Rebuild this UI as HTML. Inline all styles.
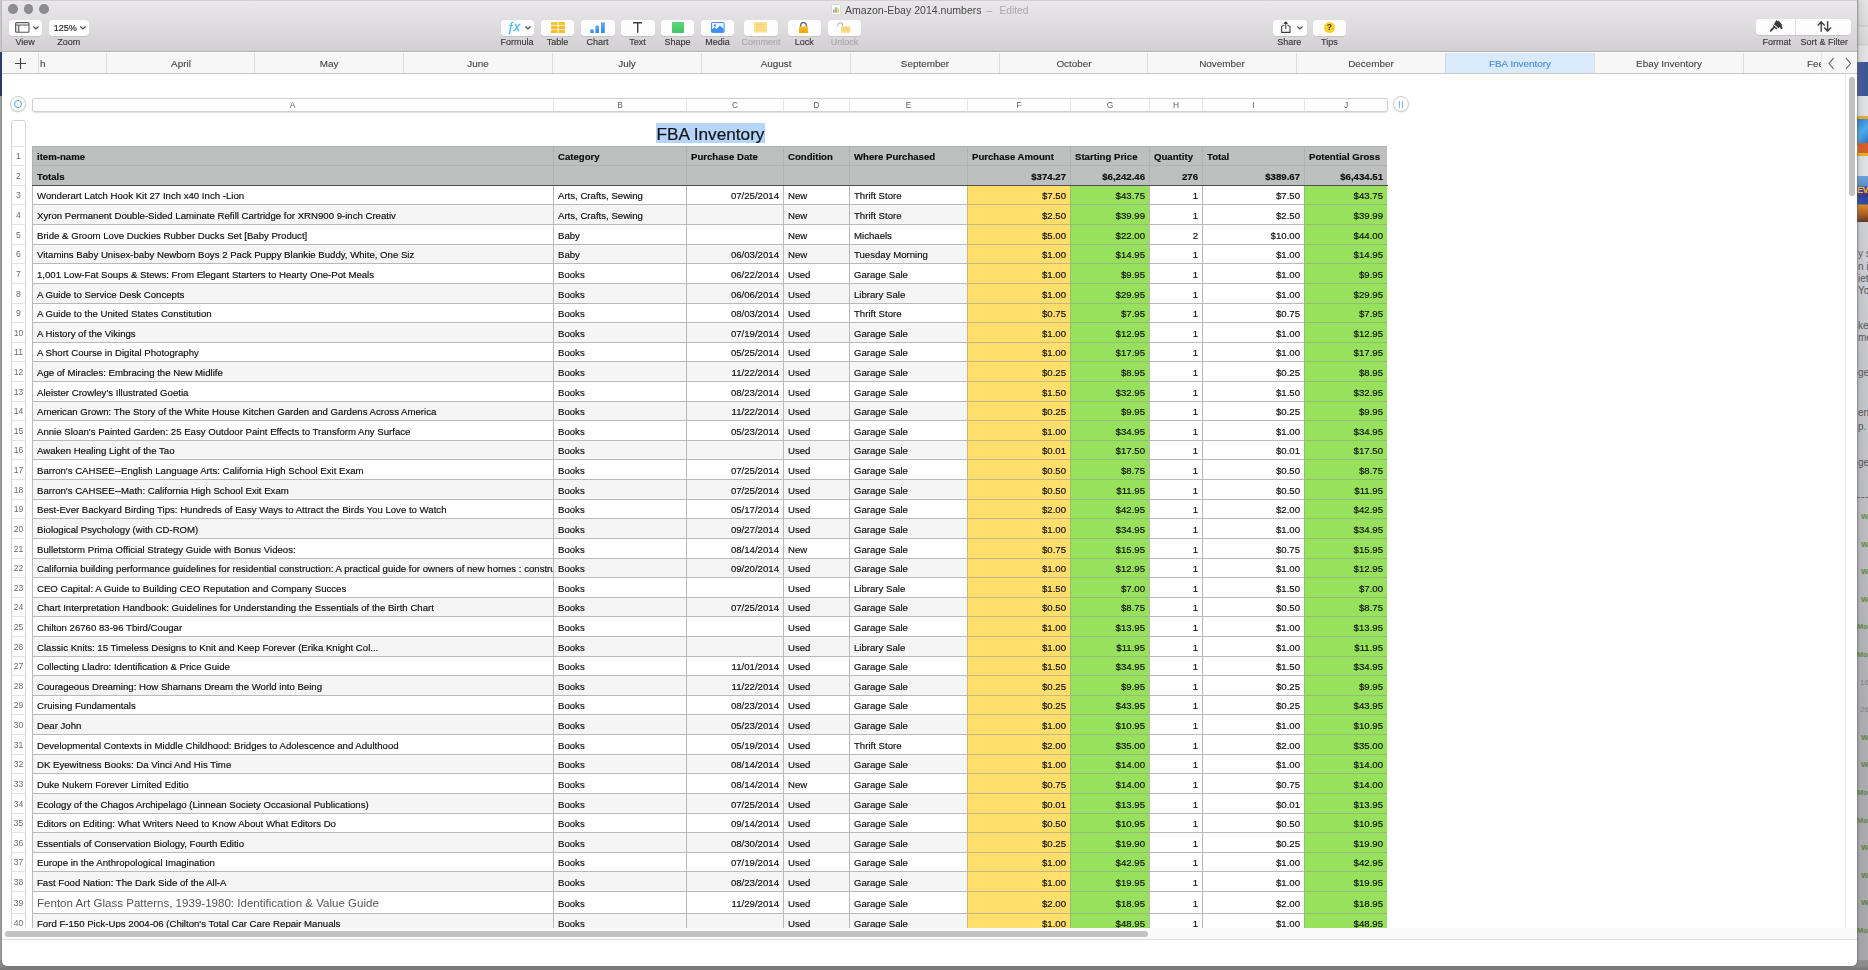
<!DOCTYPE html>
<html><head><meta charset="utf-8"><title>Amazon-Ebay 2014.numbers</title>
<style>
*{box-sizing:border-box;margin:0;padding:0}
html,body{width:1868px;height:970px;overflow:hidden}
body{position:relative;background:#8e8e8e;font-family:"Liberation Sans",sans-serif;color:#000}
.abs{position:absolute}
/* background desktop */
#bgl{position:absolute;left:0;top:0;width:3px;height:970px;background:#a2a2a2}
#bgl .a{position:absolute;left:0;top:0;width:3px;height:52px;background:#cfcfcf}
#bgl .b{position:absolute;left:0;top:52px;width:3px;height:44px;background:#2d3f77}
#bgr{position:absolute;left:1855px;top:0;width:13px;height:970px;background:#e2e3e8;overflow:hidden;font-size:10px;line-height:12px;color:#555;white-space:nowrap}
#bgr .g{position:absolute;left:3px;color:#6aa22c;font-size:7.5px;font-weight:bold}
#bgr .t{position:absolute;left:3px}
#bgr .sh{position:absolute;left:0;top:0;width:13px;height:970px;background:linear-gradient(90deg,rgba(120,120,125,.75) 0,rgba(120,120,125,.55) 2px,rgba(120,120,125,.18) 4px,rgba(120,120,125,.05) 13px)}
#bgr .sv{position:absolute;left:0;top:222px;width:13px;height:748px;background:linear-gradient(180deg,rgba(60,60,65,.08) 0,rgba(60,60,65,.18) 250px,rgba(60,60,65,.30) 500px,rgba(60,60,65,.34) 748px)}
#bgb{position:absolute;left:0;top:960px;width:1868px;height:10px;background:linear-gradient(#8f8f8f,#8a8a8a 6px,#767676 10px)}
/* window */
#win{will-change:transform;position:absolute;left:2px;top:0;width:1855px;height:966px;background:#fff;border-radius:0 0 5px 5px;overflow:hidden;box-shadow:0 0 3px 0 rgba(0,0,0,.3)}
#tb{position:absolute;left:0;top:0;width:1856px;height:52px;background:linear-gradient(#e9e7e9 0%,#e3e1e3 30%,#d2d0d2 100%);border-bottom:1px solid #b4b2b4;box-shadow:inset 0 1px 0 #d2d0d2}
.tl{position:absolute;top:4.3px;width:9.4px;height:9.4px;border-radius:50%;background:#8d8c90}
.btn{position:absolute;top:19.5px;height:16px;background:#fdfdfd;border-radius:3.5px;box-shadow:0 .5px .5px rgba(0,0,0,.18)}
.lbl{position:absolute;top:37.2px;width:80px;margin-left:-40px;text-align:center;font-size:9px;line-height:11px;color:#3a3a3a;-webkit-text-stroke:.15px #3a3a3a}
.lbl.dis{color:#a9a7a9;-webkit-text-stroke:.1px #a9a7a9}
#title{position:absolute;top:3.5px;left:843px;font-size:10.55px;line-height:13px;color:#4a4a4a;white-space:nowrap}
#title span{color:#a9a7a9}
/* tab bar */
#tabs{position:absolute;left:0;top:53px;width:1856px;height:21px;background:#f7f7f7;border-bottom:1px solid #c9c9c9;overflow:hidden}
.tab{position:absolute;top:0;height:20px;width:149px;border-left:1px solid #dcdcdc;text-align:center;font-size:9.9px;line-height:21px;color:#444;-webkit-text-stroke:.12px #444;white-space:nowrap}
.tab.sel{background:#dbeafb;color:#3f8fe8;-webkit-text-stroke:.12px #3f8fe8;border-left:1px solid #c4d7ee}
#plus{position:absolute;left:0;top:0;width:37px;height:20px;border-right:1px solid #dcdcdc}
#nav{position:absolute;left:1819px;top:0;width:37px;height:20px;background:#f7f7f7;border-left:1px solid #e2e2e2}
/* sheet */
#sheet{position:absolute;left:0;top:74px;width:1856px;height:892px;background:#fff}
#tbl{position:absolute;left:-2px;top:0;width:1420px;height:928px;overflow:hidden;font-size:9.62px;color:#000;-webkit-text-stroke:.16px #111;color:#0c0c0c}
.row{position:absolute;left:0;width:1420px;white-space:nowrap}
.row .c{position:absolute;top:0;height:100%;overflow:hidden;padding:0 4px 0 4px;background:#fff;border-left:1px solid #b9b9b9;border-top:1px solid #b9b9b9}
.row .c.r{text-align:right}
.row.alt .c{background:#f5f5f5}
.row.alt .c.wh{background:#fff}
.row .c.ye,.row.alt .c.ye{background:#ffde6b;border-color:#c4b97f}
.row .c.gr,.row.alt .c.gr{background:#98e15c;border-color:#96bb72}
.row.hd .c{background:#bdc0bf;font-weight:bold;border-color:#b0b3b2}
.row.big .c:first-child{font-size:11.55px;color:#555;-webkit-text-stroke:0}
#tblr{position:absolute;background:#b9b9b9;width:1px}
.hline{position:absolute;left:32px;width:1356px;height:1px;background:#4f4f4f}
#rowhdr{position:absolute;left:9px;top:0;width:15px;height:928px;overflow:hidden}
#rowhdr .bg{position:absolute;left:0;top:120px;width:15px;height:820px;border:1px solid #d4d4d4;border-radius:3px;background:#fff}
.rn{position:absolute;left:0;width:15px;text-align:center;font-size:8.6px;color:#6a6a6a;border-top:1px solid #e2e2e2}
#colhdr{position:absolute;left:30px;top:98px;width:1356px;height:14px;border:1px solid #d0d0d0;border-radius:3px;background:#fff;box-shadow:0 .5px 1px rgba(0,0,0,.12);overflow:hidden}
.cl{position:absolute;top:0;height:12px;text-align:center;font-size:8.4px;line-height:12px;color:#5d5d5d;border-left:1px solid #e4e4e4}
.cl:first-child{border-left:none}
.circ{position:absolute;width:16px;height:16px;border-radius:50%;border:1px solid #cfcfcf;background:#fff;box-shadow:0 .5px 1px rgba(0,0,0,.15)}
#ttl{position:absolute;left:654px;top:123px;width:109px;height:19.5px;background:#b5d5fb;font-size:17.2px;line-height:22px;text-align:center;color:#151515;white-space:nowrap;-webkit-text-stroke:.2px #151515}
#vsb{position:absolute;left:1847px;top:77px;width:6px;height:119px;border-radius:3px;background:#c1c1c1}
#vtrk{position:absolute;left:1843px;top:74px;width:1px;height:854px;background:#ececec}
#hsb{position:absolute;left:3px;top:931px;width:1143px;height:6px;border-radius:3px;background:#c2c2c2}
#hln{position:absolute;left:0;top:928px;width:1855px;height:12px;background:#fafafa;border-bottom:1px solid #dedede}
</style></head><body>
<div id="bgl"><div class="a"></div><div class="b"></div></div>
<div id="bgr">
<div class="abs" style="left:0;top:0;width:13px;height:62px;background:linear-gradient(#ececec 0,#e2e2e2 25px,#c9c9c9 26px,#e6e6e6 27px,#dedede 44px,#cfcfcf 45px,#ececec 46px,#eaeaea 62px)"></div>
<div class="abs" style="left:0;top:62px;width:13px;height:34px;background:#3a5496"></div>
<div class="abs" style="left:0;top:96px;width:13px;height:20px;background:#e9eaed"></div>
<div class="abs" style="left:0;top:116px;width:13px;height:40px;background:#f2b21d"><div class="abs" style="left:0;top:3px;width:13px;height:26px;background:linear-gradient(135deg,#1a6fd0,#49b2f2 50%,#1f6fd2)"></div><div class="abs" style="left:3px;top:27px;width:10px;height:10px;background:#e4571f"></div></div>
<div class="abs" style="left:0;top:156px;width:13px;height:20px;background:#e9eaed"></div>
<div class="abs" style="left:0;top:176px;width:13px;height:46px;background:linear-gradient(#6aa5e6 0,#5b8ed4 10px,#4a3b96 11px,#3a2f85 20px,#1f3f9c 21px,#274aa8 28px,#e08f1c 29px,#b55c18 38px,#5e2f1c 46px)"><div class="abs" style="left:2px;top:8px;font-size:9px;font-weight:bold;color:#ffd21f;letter-spacing:-.5px">EVA</div></div>
<div class="abs" style="left:0;top:222px;width:13px;height:748px;background:#e4e5ea"></div>
<div class="t" style="top:248.0px">y s</div>
<div class="t" style="top:260.5px">n is</div>
<div class="t" style="top:272.5px">iets</div>
<div class="t" style="top:284.5px">You</div>
<div class="t" style="top:320.1px">kes</div>
<div class="t" style="top:332.3px">me</div>
<div class="t" style="top:366.5px">ged</div>
<div class="t" style="top:406.5px">en</div>
<div class="t" style="top:420.5px">p.</div>
<div class="t" style="top:456.5px">ge</div>
<div class="g" style="top:511.0px;left:6px">W</div>
<div class="g" style="top:538.6px;left:6px">W</div>
<div class="g" style="top:566.2px;left:6px">W</div>
<div class="g" style="top:593.8px;left:6px">W</div>
<div class="g" style="top:621.4px;left:2px">Mob</div>
<div class="g" style="top:649.0px;left:2px">Mob</div>
<div class="t" style="top:676.6px;left:5px;color:#999;font-size:8px">16</div>
<div class="t" style="top:704.2px;left:5px;color:#999;font-size:8px">26</div>
<div class="g" style="top:731.8px;left:6px">W</div>
<div class="g" style="top:759.4px;left:6px">W</div>
<div class="g" style="top:787.0px;left:2px">Mob</div>
<div class="g" style="top:814.6px;left:2px">Mob</div>
<div class="g" style="top:842.2px;left:6px">W</div>
<div class="g" style="top:869.8px;left:6px">W</div>
<div class="g" style="top:897.4px;left:6px">W</div>
<div class="g" style="top:925.0px;left:2px">Mob</div>
<div class="abs" style="left:2px;top:497px;width:11px;height:0;border-top:1px dashed #777"></div>
<div class="sv"></div><div class="sh"></div>
</div>
<div id="bgb"></div>
<div id="win">
<div id="tb">
<div class="tl" style="left:6.3px"></div><div class="tl" style="left:21.8px"></div><div class="tl" style="left:37.2px"></div>
<div id="title">Amazon-Ebay 2014.numbers<span style="margin-left:5px">–</span><span style="margin-left:7px;font-size:10.2px">Edited</span></div>
<div class="btn" style="left:6.8px;width:33.2px"><svg class="abs" style="left:6.2px;top:2.8px" width="15" height="11" viewBox="0 0 15 11"><rect x=".6" y=".6" width="13.4" height="9.6" rx="1" fill="none" stroke="#5a5a5a" stroke-width="1.1"/><path d="M.6 3h13.4M3.8 3v7" stroke="#5a5a5a" stroke-width="1.1" fill="none"/><rect x=".6" y="3" width="3.2" height="7" fill="#5a5a5a" opacity=".15"/></svg><svg class="abs" style="left:23.0px;top:5.2px" width="8" height="6" viewBox="0 0 8 6"><path d="M1.3 1.5l2.6 2.5 2.6-2.5" stroke="#4d4d4d" stroke-width="1.25" fill="none"/></svg></div>
<div class="lbl" style="left:23.2px">View</div>
<div class="btn" style="left:46.5px;width:40.5px"><div class="abs" style="left:5.2px;top:2.5px;font-size:9.05px;line-height:13px;color:#2e2e2e;-webkit-text-stroke:.2px #2e2e2e">125%</div><svg class="abs" style="left:30.6px;top:5.2px" width="8" height="6" viewBox="0 0 8 6"><path d="M1.3 1.5l2.6 2.5 2.6-2.5" stroke="#4d4d4d" stroke-width="1.25" fill="none"/></svg></div>
<div class="lbl" style="left:66.7px">Zoom</div>
<div class="btn" style="left:498.9px;width:33.6px"><div class="abs" style="left:6px;top:.2px;font-style:italic;font-size:12.6px;line-height:15px;color:#48c0f3;-webkit-text-stroke:.3px #48c0f3;letter-spacing:-.2px">&#402;x</div><svg class="abs" style="left:23.2px;top:5.4px" width="8" height="6" viewBox="0 0 8 6"><path d="M1.3 1.5l2.6 2.5 2.6-2.5" stroke="#4d4d4d" stroke-width="1.25" fill="none"/></svg></div>
<div class="lbl" style="left:515.0px">Formula</div>
<div class="btn" style="left:538.9px;width:33.5px"><svg class="abs" style="left:9.7px;top:2.3px" width="14.2" height="11.3" viewBox="0 0 14.2 11.3"><rect x="0.00" y="0.00" width="6.7" height="3.3" rx=".7" fill="#fdc32b"/><rect x="7.50" y="0.00" width="6.7" height="3.3" rx=".7" fill="#fdc32b"/><rect x="0.00" y="4.00" width="6.7" height="3.3" rx=".7" fill="#fbbd2c"/><rect x="7.50" y="4.00" width="6.7" height="3.3" rx=".7" fill="#fbbd2c"/><rect x="0.00" y="8.00" width="6.7" height="3.3" rx=".7" fill="#fbbd2c"/><rect x="7.50" y="8.00" width="6.7" height="3.3" rx=".7" fill="#fbbd2c"/></svg></div>
<div class="lbl" style="left:555.4px">Table</div>
<div class="btn" style="left:578.8px;width:33.8px"><svg class="abs" style="left:9.2px;top:2.4px" width="15" height="11.4" viewBox="0 0 15 11.4"><defs><linearGradient id="cb" x1="0" y1="0" x2="0" y2="1"><stop offset="0" stop-color="#62abf9"/><stop offset="1" stop-color="#2d84f0"/></linearGradient></defs><rect x=".2" y="7.2" width="3.6" height="4.1" rx=".8" fill="url(#cb)"/><rect x="5.4" y="3.6" width="3.6" height="7.7" rx=".8" fill="url(#cb)"/><rect x="11" y=".2" width="3.8" height="11.1" rx=".8" fill="url(#cb)"/></svg></div>
<div class="lbl" style="left:595.5px">Chart</div>
<div class="btn" style="left:619.0px;width:33.5px"><svg class="abs" style="left:11.9px;top:2.7px" width="9.4" height="10.8" viewBox="0 0 9.4 10.8"><path d="M0 .7h9.4M4.7 .7v10.1" stroke="#3f3f3f" stroke-width="1.45" fill="none"/></svg></div>
<div class="lbl" style="left:635.6px">Text</div>
<div class="btn" style="left:659.1px;width:33.2px"><div class="abs" style="left:11.0px;top:2.5px;width:11.9px;height:10.9px;border-radius:.8px;background:linear-gradient(#5ad97c,#42c462)"></div></div>
<div class="lbl" style="left:675.5px">Shape</div>
<div class="btn" style="left:699.3px;width:32.9px"><svg class="abs" style="left:10.0px;top:2.5px" width="13.6" height="10.9" viewBox="0 0 13.6 10.9"><rect x=".5" y=".5" width="12.6" height="9.9" rx=".6" fill="#eef5ff" stroke="#3d8ff5" stroke-width="1"/><path d="M.8 10.2V7.6l2.6-2.3 2.2 2 3.4-3.7 3.8 3.6v3z" fill="#3d8ff5"/><circle cx="3.9" cy="3.3" r="1.1" fill="#3d8ff5"/></svg></div>
<div class="lbl" style="left:715.6px">Media</div>
<div class="btn" style="left:742.0px;width:33.8px"><svg class="abs" style="left:10.3px;top:2.5px" width="13.2" height="10.6" viewBox="0 0 13.2 10.6"><rect width="13.2" height="10.6" rx=".8" fill="#fbe18e"/><path d="M2 2.8h9.2M2 5.3h9.2M2 7.8h9.2" stroke="#f3cf74" stroke-width="1.2" stroke-dasharray="2.3 1"/></svg></div>
<div class="lbl dis" style="left:759.0px">Comment</div>
<div class="btn" style="left:785.5px;width:33.8px"><svg class="abs" style="left:11.6px;top:2.0px" width="9" height="11.6" viewBox="0 0 9 11.6"><path d="M1.7 5V3.4a2.8 2.8 0 015.6 0V5" fill="none" stroke="#6a6760" stroke-width="1.3"/><defs><linearGradient id="lg" x1="0" y1="0" x2="0" y2="1"><stop offset="0" stop-color="#f9c233"/><stop offset="1" stop-color="#efa600"/></linearGradient></defs><rect x="0" y="4.5" width="9" height="7.1" rx=".9" fill="url(#lg)"/><path d="M1.8 7.5h5.4M1.8 9.3h5.4" stroke="#d99600" stroke-width=".6" opacity=".6"/></svg></div>
<div class="lbl" style="left:802.2px">Lock</div>
<div class="btn" style="left:825.6px;width:33.9px"><svg class="abs" style="left:9.6px;top:2.5px" width="13.4" height="10.8" viewBox="0 0 13.4 10.8"><path d="M.7 4.6V3.2a2.5 2.5 0 015 0v1.2" fill="none" stroke="#b9b7b2" stroke-width="1.1"/><rect x="4" y="4.3" width="9.3" height="6.4" rx=".8" fill="#f9dd88"/><path d="M5.5 6.6h6.3M5.5 8.4h6.3" stroke="#efc968" stroke-width=".7"/></svg></div>
<div class="lbl dis" style="left:842.5px">Unlock</div>
<div class="btn" style="left:1270.6px;width:34.0px"><svg class="abs" style="left:8.8px;top:1.5px" width="9.6" height="12" viewBox="0 0 9.6 12"><path d="M3.2 3.9L.6 5.6v5.8h8.4V5.6L6.4 3.9" fill="none" stroke="#3a3a3a" stroke-width="1.05" stroke-linejoin="round"/><path d="M4.8 8.2V1M3.2 2.4L4.8.7l1.6 1.7z" fill="#3a3a3a" stroke="#3a3a3a" stroke-width="1"/></svg><svg class="abs" style="left:23.5px;top:5.4px" width="8" height="6" viewBox="0 0 8 6"><path d="M1.3 1.5l2.6 2.5 2.6-2.5" stroke="#4d4d4d" stroke-width="1.25" fill="none"/></svg></div>
<div class="lbl" style="left:1287.2px">Share</div>
<div class="btn" style="left:1310.5px;width:33.8px"><div class="abs" style="left:11.3px;top:2.4px;width:11.4px;height:11.4px;border-radius:50%;background:#f9d12d;font-size:8.6px;font-weight:bold;line-height:11.8px;text-align:center;color:#54350c">?</div></div>
<div class="lbl" style="left:1327.4px">Tips</div>
<div class="btn" style="left:1754.4px;width:94.8px;top:19px"><div class="abs" style="left:39.1px;top:0;width:1px;height:16px;background:#e2e0e2"></div><svg class="abs" style="left:14.1px;top:1.4px" width="12.8" height="12" viewBox="0 0 12.8 12"><path d="M6.3 0l1.1 1 .9-.5.6 1.2 1-.2.2 1.2 1.1.2-.2 1.1 1.3.7-.6.9.9 3.2-1.7.5-.9-2.2-1.5 1.2L4 4.2z" fill="#3b3b3b"/><path d="M3.6 5l3.8 3.6-1 .9L2.7 5.800z" fill="#3b3b3b"/><path d="M4 7.300L.9 10.700" stroke="#3b3b3b" stroke-width="1.9" stroke-linecap="round"/></svg><svg class="abs" style="left:60.2px;top:2.3px" width="15" height="11" viewBox="0 0 15 11"><path d="M4.2 10.7V1.200M.7 4.400l3.500-3.500 3.500 3.500M10.600.3v9.500M7.100 6.600l3.500 3.500 3.500-3.500" fill="none" stroke="#3f3f3f" stroke-width="1.4"/></svg></div>
<div class="lbl" style="left:1774.8px">Format</div>
<div class="lbl" style="left:1822.3px">Sort &amp; Filter</div>
<!-- doc icon -->
<svg class="abs" style="left:829px;top:4px" width="10" height="11" viewBox="0 0 10 11"><rect x=".5" y=".5" width="9" height="10" rx="1" fill="#fff" stroke="#d4d4d4" stroke-width=".8"/><rect x="2" y="5.4" width="1.6" height="3.4" fill="#ee7fa6"/><rect x="4.2" y="3.2" width="1.6" height="5.6" fill="#5ccb5f"/><rect x="6.4" y="4.4" width="1.6" height="4.4" fill="#f3c64b"/></svg>
</div><!-- /tb -->
<div id="tabs">
<div id="plus"><svg class="abs" style="left:12px;top:4px" width="13" height="13" viewBox="0 0 13 13"><path d="M6.5 1v11M1 6.5h11" stroke="#444" stroke-width="1.2"/></svg></div>
<div class="tab" style="left:-45px;text-align:left;padding-left:82px">h</div>
<div class="tab" style="left:104px">April</div>
<div class="tab" style="left:252px">May</div>
<div class="tab" style="left:401px">June</div>
<div class="tab" style="left:550px">July</div>
<div class="tab" style="left:699px">August</div>
<div class="tab" style="left:848px">September</div>
<div class="tab" style="left:997px">October</div>
<div class="tab" style="left:1145px">November</div>
<div class="tab" style="left:1294px">December</div>
<div class="tab sel" style="left:1443px">FBA Inventory</div>
<div class="tab" style="left:1592px">Ebay Inventory</div>
<div class="tab" style="left:1741px;text-align:left;padding-left:63px">Fees</div>
<div id="nav" style="left:1819px"><svg class="abs" style="left:4px;top:4px" width="30" height="13" viewBox="0 0 30 13"><path d="M7.6 1.2L3 6.5l4.6 5.3M20 1.2l4.6 5.3-4.6 5.3" fill="none" stroke="#666" stroke-width="1.1"/></svg></div>
</div>
<div id="sheet0" style="position:absolute;left:0;top:0;width:1856px;height:966px;pointer-events:none">
<div class="circ" style="left:7.5px;top:96px"><div class="abs" style="left:3px;top:3px;width:8px;height:8px;border-radius:50%;border:1.4px solid #4aa3f7"></div></div>
<div class="circ" style="left:1391px;top:96px"><div class="abs" style="left:5px;top:3.5px;width:1px;height:7px;background:#74b8f9"></div><div class="abs" style="left:8px;top:3.5px;width:1px;height:7px;background:#74b8f9"></div></div>
<div id="ttl">FBA Inventory</div>
<div id="hln"></div><div id="vtrk"></div><div id="vsb"></div><div id="hsb"></div>
<div id="tbl">
<div class="row hd" style="top:146px;height:19px;line-height:20px">
<div class="c l" style="left:32px;width:521px">item-name</div>
<div class="c l" style="left:553px;width:133px">Category</div>
<div class="c l" style="left:686px;width:97px">Purchase Date</div>
<div class="c l" style="left:783px;width:66px">Condition</div>
<div class="c l" style="left:849px;width:118px">Where Purchased</div>
<div class="c l" style="left:967px;width:103px">Purchase Amount</div>
<div class="c l" style="left:1070px;width:79px">Starting Price</div>
<div class="c l" style="left:1149px;width:53px">Quantity</div>
<div class="c l" style="left:1202px;width:102px">Total</div>
<div class="c l" style="left:1304px;width:83px">Potential Gross</div>
</div>
<div class="row hd" style="top:165px;height:20px;line-height:21px">
<div class="c l" style="left:32px;width:521px">Totals</div>
<div class="c l" style="left:553px;width:133px"></div>
<div class="c r" style="left:686px;width:97px"></div>
<div class="c l" style="left:783px;width:66px"></div>
<div class="c l" style="left:849px;width:118px"></div>
<div class="c r" style="left:967px;width:103px">$374.27</div>
<div class="c r" style="left:1070px;width:79px">$6,242.46</div>
<div class="c r" style="left:1149px;width:53px">276</div>
<div class="c r" style="left:1202px;width:102px">$389.67</div>
<div class="c r" style="left:1304px;width:83px">$6,434.51</div>
</div>
<div class="row" style="top:185px;height:19px;line-height:20px">
<div class="c l" style="left:32px;width:521px">Wonderart Latch Hook Kit 27 Inch x40 Inch -Lion</div>
<div class="c l" style="left:553px;width:133px">Arts, Crafts, Sewing</div>
<div class="c r" style="left:686px;width:97px">07/25/2014</div>
<div class="c l" style="left:783px;width:66px">New</div>
<div class="c l" style="left:849px;width:118px">Thrift Store</div>
<div class="c r ye" style="left:967px;width:103px">$7.50</div>
<div class="c r gr" style="left:1070px;width:79px">$43.75</div>
<div class="c r wh" style="left:1149px;width:53px">1</div>
<div class="c r wh" style="left:1202px;width:102px">$7.50</div>
<div class="c r gr" style="left:1304px;width:83px">$43.75</div>
</div>
<div class="row alt" style="top:204px;height:20px;line-height:21px">
<div class="c l" style="left:32px;width:521px">Xyron Permanent Double-Sided Laminate Refill Cartridge for XRN900 9-inch Creativ</div>
<div class="c l" style="left:553px;width:133px">Arts, Crafts, Sewing</div>
<div class="c r" style="left:686px;width:97px"></div>
<div class="c l" style="left:783px;width:66px">New</div>
<div class="c l" style="left:849px;width:118px">Thrift Store</div>
<div class="c r ye" style="left:967px;width:103px">$2.50</div>
<div class="c r gr" style="left:1070px;width:79px">$39.99</div>
<div class="c r wh" style="left:1149px;width:53px">1</div>
<div class="c r wh" style="left:1202px;width:102px">$2.50</div>
<div class="c r gr" style="left:1304px;width:83px">$39.99</div>
</div>
<div class="row" style="top:224px;height:20px;line-height:21px">
<div class="c l" style="left:32px;width:521px">Bride &amp; Groom Love Duckies Rubber Ducks Set [Baby Product]</div>
<div class="c l" style="left:553px;width:133px">Baby</div>
<div class="c r" style="left:686px;width:97px"></div>
<div class="c l" style="left:783px;width:66px">New</div>
<div class="c l" style="left:849px;width:118px">Michaels</div>
<div class="c r ye" style="left:967px;width:103px">$5.00</div>
<div class="c r gr" style="left:1070px;width:79px">$22.00</div>
<div class="c r wh" style="left:1149px;width:53px">2</div>
<div class="c r wh" style="left:1202px;width:102px">$10.00</div>
<div class="c r gr" style="left:1304px;width:83px">$44.00</div>
</div>
<div class="row alt" style="top:244px;height:19px;line-height:20px">
<div class="c l" style="left:32px;width:521px">Vitamins Baby Unisex-baby Newborn Boys 2 Pack Puppy Blankie Buddy, White, One Siz</div>
<div class="c l" style="left:553px;width:133px">Baby</div>
<div class="c r" style="left:686px;width:97px">06/03/2014</div>
<div class="c l" style="left:783px;width:66px">New</div>
<div class="c l" style="left:849px;width:118px">Tuesday Morning</div>
<div class="c r ye" style="left:967px;width:103px">$1.00</div>
<div class="c r gr" style="left:1070px;width:79px">$14.95</div>
<div class="c r wh" style="left:1149px;width:53px">1</div>
<div class="c r wh" style="left:1202px;width:102px">$1.00</div>
<div class="c r gr" style="left:1304px;width:83px">$14.95</div>
</div>
<div class="row" style="top:263px;height:20px;line-height:21px">
<div class="c l" style="left:32px;width:521px">1,001 Low-Fat Soups &amp; Stews: From Elegant Starters to Hearty One-Pot Meals</div>
<div class="c l" style="left:553px;width:133px">Books</div>
<div class="c r" style="left:686px;width:97px">06/22/2014</div>
<div class="c l" style="left:783px;width:66px">Used</div>
<div class="c l" style="left:849px;width:118px">Garage Sale</div>
<div class="c r ye" style="left:967px;width:103px">$1.00</div>
<div class="c r gr" style="left:1070px;width:79px">$9.95</div>
<div class="c r wh" style="left:1149px;width:53px">1</div>
<div class="c r wh" style="left:1202px;width:102px">$1.00</div>
<div class="c r gr" style="left:1304px;width:83px">$9.95</div>
</div>
<div class="row alt" style="top:283px;height:20px;line-height:21px">
<div class="c l" style="left:32px;width:521px">A Guide to Service Desk Concepts</div>
<div class="c l" style="left:553px;width:133px">Books</div>
<div class="c r" style="left:686px;width:97px">06/06/2014</div>
<div class="c l" style="left:783px;width:66px">Used</div>
<div class="c l" style="left:849px;width:118px">Library Sale</div>
<div class="c r ye" style="left:967px;width:103px">$1.00</div>
<div class="c r gr" style="left:1070px;width:79px">$29.95</div>
<div class="c r wh" style="left:1149px;width:53px">1</div>
<div class="c r wh" style="left:1202px;width:102px">$1.00</div>
<div class="c r gr" style="left:1304px;width:83px">$29.95</div>
</div>
<div class="row" style="top:303px;height:19px;line-height:20px">
<div class="c l" style="left:32px;width:521px">A Guide to the United States Constitution</div>
<div class="c l" style="left:553px;width:133px">Books</div>
<div class="c r" style="left:686px;width:97px">08/03/2014</div>
<div class="c l" style="left:783px;width:66px">Used</div>
<div class="c l" style="left:849px;width:118px">Thrift Store</div>
<div class="c r ye" style="left:967px;width:103px">$0.75</div>
<div class="c r gr" style="left:1070px;width:79px">$7.95</div>
<div class="c r wh" style="left:1149px;width:53px">1</div>
<div class="c r wh" style="left:1202px;width:102px">$0.75</div>
<div class="c r gr" style="left:1304px;width:83px">$7.95</div>
</div>
<div class="row alt" style="top:322px;height:20px;line-height:21px">
<div class="c l" style="left:32px;width:521px">A History of the Vikings</div>
<div class="c l" style="left:553px;width:133px">Books</div>
<div class="c r" style="left:686px;width:97px">07/19/2014</div>
<div class="c l" style="left:783px;width:66px">Used</div>
<div class="c l" style="left:849px;width:118px">Garage Sale</div>
<div class="c r ye" style="left:967px;width:103px">$1.00</div>
<div class="c r gr" style="left:1070px;width:79px">$12.95</div>
<div class="c r wh" style="left:1149px;width:53px">1</div>
<div class="c r wh" style="left:1202px;width:102px">$1.00</div>
<div class="c r gr" style="left:1304px;width:83px">$12.95</div>
</div>
<div class="row" style="top:342px;height:19px;line-height:20px">
<div class="c l" style="left:32px;width:521px">A Short Course in Digital Photography</div>
<div class="c l" style="left:553px;width:133px">Books</div>
<div class="c r" style="left:686px;width:97px">05/25/2014</div>
<div class="c l" style="left:783px;width:66px">Used</div>
<div class="c l" style="left:849px;width:118px">Garage Sale</div>
<div class="c r ye" style="left:967px;width:103px">$1.00</div>
<div class="c r gr" style="left:1070px;width:79px">$17.95</div>
<div class="c r wh" style="left:1149px;width:53px">1</div>
<div class="c r wh" style="left:1202px;width:102px">$1.00</div>
<div class="c r gr" style="left:1304px;width:83px">$17.95</div>
</div>
<div class="row alt" style="top:361px;height:20px;line-height:21px">
<div class="c l" style="left:32px;width:521px">Age of Miracles: Embracing the New Midlife</div>
<div class="c l" style="left:553px;width:133px">Books</div>
<div class="c r" style="left:686px;width:97px">11/22/2014</div>
<div class="c l" style="left:783px;width:66px">Used</div>
<div class="c l" style="left:849px;width:118px">Garage Sale</div>
<div class="c r ye" style="left:967px;width:103px">$0.25</div>
<div class="c r gr" style="left:1070px;width:79px">$8.95</div>
<div class="c r wh" style="left:1149px;width:53px">1</div>
<div class="c r wh" style="left:1202px;width:102px">$0.25</div>
<div class="c r gr" style="left:1304px;width:83px">$8.95</div>
</div>
<div class="row" style="top:381px;height:20px;line-height:21px">
<div class="c l" style="left:32px;width:521px">Aleister Crowley's Illustrated Goetia</div>
<div class="c l" style="left:553px;width:133px">Books</div>
<div class="c r" style="left:686px;width:97px">08/23/2014</div>
<div class="c l" style="left:783px;width:66px">Used</div>
<div class="c l" style="left:849px;width:118px">Garage Sale</div>
<div class="c r ye" style="left:967px;width:103px">$1.50</div>
<div class="c r gr" style="left:1070px;width:79px">$32.95</div>
<div class="c r wh" style="left:1149px;width:53px">1</div>
<div class="c r wh" style="left:1202px;width:102px">$1.50</div>
<div class="c r gr" style="left:1304px;width:83px">$32.95</div>
</div>
<div class="row alt" style="top:401px;height:19px;line-height:20px">
<div class="c l" style="left:32px;width:521px">American Grown: The Story of the White House Kitchen Garden and Gardens Across America</div>
<div class="c l" style="left:553px;width:133px">Books</div>
<div class="c r" style="left:686px;width:97px">11/22/2014</div>
<div class="c l" style="left:783px;width:66px">Used</div>
<div class="c l" style="left:849px;width:118px">Garage Sale</div>
<div class="c r ye" style="left:967px;width:103px">$0.25</div>
<div class="c r gr" style="left:1070px;width:79px">$9.95</div>
<div class="c r wh" style="left:1149px;width:53px">1</div>
<div class="c r wh" style="left:1202px;width:102px">$0.25</div>
<div class="c r gr" style="left:1304px;width:83px">$9.95</div>
</div>
<div class="row" style="top:420px;height:20px;line-height:21px">
<div class="c l" style="left:32px;width:521px">Annie Sloan's Painted Garden: 25 Easy Outdoor Paint Effects to Transform Any Surface</div>
<div class="c l" style="left:553px;width:133px">Books</div>
<div class="c r" style="left:686px;width:97px">05/23/2014</div>
<div class="c l" style="left:783px;width:66px">Used</div>
<div class="c l" style="left:849px;width:118px">Garage Sale</div>
<div class="c r ye" style="left:967px;width:103px">$1.00</div>
<div class="c r gr" style="left:1070px;width:79px">$34.95</div>
<div class="c r wh" style="left:1149px;width:53px">1</div>
<div class="c r wh" style="left:1202px;width:102px">$1.00</div>
<div class="c r gr" style="left:1304px;width:83px">$34.95</div>
</div>
<div class="row alt" style="top:440px;height:19px;line-height:20px">
<div class="c l" style="left:32px;width:521px">Awaken Healing Light of the Tao</div>
<div class="c l" style="left:553px;width:133px">Books</div>
<div class="c r" style="left:686px;width:97px"></div>
<div class="c l" style="left:783px;width:66px">Used</div>
<div class="c l" style="left:849px;width:118px">Garage Sale</div>
<div class="c r ye" style="left:967px;width:103px">$0.01</div>
<div class="c r gr" style="left:1070px;width:79px">$17.50</div>
<div class="c r wh" style="left:1149px;width:53px">1</div>
<div class="c r wh" style="left:1202px;width:102px">$0.01</div>
<div class="c r gr" style="left:1304px;width:83px">$17.50</div>
</div>
<div class="row" style="top:459px;height:20px;line-height:21px">
<div class="c l" style="left:32px;width:521px">Barron's CAHSEE--English Language Arts: California High School Exit Exam</div>
<div class="c l" style="left:553px;width:133px">Books</div>
<div class="c r" style="left:686px;width:97px">07/25/2014</div>
<div class="c l" style="left:783px;width:66px">Used</div>
<div class="c l" style="left:849px;width:118px">Garage Sale</div>
<div class="c r ye" style="left:967px;width:103px">$0.50</div>
<div class="c r gr" style="left:1070px;width:79px">$8.75</div>
<div class="c r wh" style="left:1149px;width:53px">1</div>
<div class="c r wh" style="left:1202px;width:102px">$0.50</div>
<div class="c r gr" style="left:1304px;width:83px">$8.75</div>
</div>
<div class="row alt" style="top:479px;height:20px;line-height:21px">
<div class="c l" style="left:32px;width:521px">Barron's CAHSEE--Math: California High School Exit Exam</div>
<div class="c l" style="left:553px;width:133px">Books</div>
<div class="c r" style="left:686px;width:97px">07/25/2014</div>
<div class="c l" style="left:783px;width:66px">Used</div>
<div class="c l" style="left:849px;width:118px">Garage Sale</div>
<div class="c r ye" style="left:967px;width:103px">$0.50</div>
<div class="c r gr" style="left:1070px;width:79px">$11.95</div>
<div class="c r wh" style="left:1149px;width:53px">1</div>
<div class="c r wh" style="left:1202px;width:102px">$0.50</div>
<div class="c r gr" style="left:1304px;width:83px">$11.95</div>
</div>
<div class="row" style="top:499px;height:19px;line-height:20px">
<div class="c l" style="left:32px;width:521px">Best-Ever Backyard Birding Tips: Hundreds of Easy Ways to Attract the Birds You Love to Watch</div>
<div class="c l" style="left:553px;width:133px">Books</div>
<div class="c r" style="left:686px;width:97px">05/17/2014</div>
<div class="c l" style="left:783px;width:66px">Used</div>
<div class="c l" style="left:849px;width:118px">Garage Sale</div>
<div class="c r ye" style="left:967px;width:103px">$2.00</div>
<div class="c r gr" style="left:1070px;width:79px">$42.95</div>
<div class="c r wh" style="left:1149px;width:53px">1</div>
<div class="c r wh" style="left:1202px;width:102px">$2.00</div>
<div class="c r gr" style="left:1304px;width:83px">$42.95</div>
</div>
<div class="row alt" style="top:518px;height:20px;line-height:21px">
<div class="c l" style="left:32px;width:521px">Biological Psychology (with CD-ROM)</div>
<div class="c l" style="left:553px;width:133px">Books</div>
<div class="c r" style="left:686px;width:97px">09/27/2014</div>
<div class="c l" style="left:783px;width:66px">Used</div>
<div class="c l" style="left:849px;width:118px">Garage Sale</div>
<div class="c r ye" style="left:967px;width:103px">$1.00</div>
<div class="c r gr" style="left:1070px;width:79px">$34.95</div>
<div class="c r wh" style="left:1149px;width:53px">1</div>
<div class="c r wh" style="left:1202px;width:102px">$1.00</div>
<div class="c r gr" style="left:1304px;width:83px">$34.95</div>
</div>
<div class="row" style="top:538px;height:20px;line-height:21px">
<div class="c l" style="left:32px;width:521px">Bulletstorm Prima Official Strategy Guide with Bonus Videos:</div>
<div class="c l" style="left:553px;width:133px">Books</div>
<div class="c r" style="left:686px;width:97px">08/14/2014</div>
<div class="c l" style="left:783px;width:66px">New</div>
<div class="c l" style="left:849px;width:118px">Garage Sale</div>
<div class="c r ye" style="left:967px;width:103px">$0.75</div>
<div class="c r gr" style="left:1070px;width:79px">$15.95</div>
<div class="c r wh" style="left:1149px;width:53px">1</div>
<div class="c r wh" style="left:1202px;width:102px">$0.75</div>
<div class="c r gr" style="left:1304px;width:83px">$15.95</div>
</div>
<div class="row alt" style="top:558px;height:19px;line-height:20px">
<div class="c l" style="left:32px;width:521px">California building performance guidelines for residential construction: A practical guide for owners of new homes : construction</div>
<div class="c l" style="left:553px;width:133px">Books</div>
<div class="c r" style="left:686px;width:97px">09/20/2014</div>
<div class="c l" style="left:783px;width:66px">Used</div>
<div class="c l" style="left:849px;width:118px">Garage Sale</div>
<div class="c r ye" style="left:967px;width:103px">$1.00</div>
<div class="c r gr" style="left:1070px;width:79px">$12.95</div>
<div class="c r wh" style="left:1149px;width:53px">1</div>
<div class="c r wh" style="left:1202px;width:102px">$1.00</div>
<div class="c r gr" style="left:1304px;width:83px">$12.95</div>
</div>
<div class="row" style="top:577px;height:20px;line-height:21px">
<div class="c l" style="left:32px;width:521px">CEO Capital: A Guide to Building CEO Reputation and Company Succes</div>
<div class="c l" style="left:553px;width:133px">Books</div>
<div class="c r" style="left:686px;width:97px"></div>
<div class="c l" style="left:783px;width:66px">Used</div>
<div class="c l" style="left:849px;width:118px">Library Sale</div>
<div class="c r ye" style="left:967px;width:103px">$1.50</div>
<div class="c r gr" style="left:1070px;width:79px">$7.00</div>
<div class="c r wh" style="left:1149px;width:53px">1</div>
<div class="c r wh" style="left:1202px;width:102px">$1.50</div>
<div class="c r gr" style="left:1304px;width:83px">$7.00</div>
</div>
<div class="row alt" style="top:597px;height:19px;line-height:20px">
<div class="c l" style="left:32px;width:521px">Chart Interpretation Handbook: Guidelines for Understanding the Essentials of the Birth Chart</div>
<div class="c l" style="left:553px;width:133px">Books</div>
<div class="c r" style="left:686px;width:97px">07/25/2014</div>
<div class="c l" style="left:783px;width:66px">Used</div>
<div class="c l" style="left:849px;width:118px">Garage Sale</div>
<div class="c r ye" style="left:967px;width:103px">$0.50</div>
<div class="c r gr" style="left:1070px;width:79px">$8.75</div>
<div class="c r wh" style="left:1149px;width:53px">1</div>
<div class="c r wh" style="left:1202px;width:102px">$0.50</div>
<div class="c r gr" style="left:1304px;width:83px">$8.75</div>
</div>
<div class="row" style="top:616px;height:20px;line-height:21px">
<div class="c l" style="left:32px;width:521px">Chilton 26760 83-96 Tbird/Cougar</div>
<div class="c l" style="left:553px;width:133px">Books</div>
<div class="c r" style="left:686px;width:97px"></div>
<div class="c l" style="left:783px;width:66px">Used</div>
<div class="c l" style="left:849px;width:118px">Garage Sale</div>
<div class="c r ye" style="left:967px;width:103px">$1.00</div>
<div class="c r gr" style="left:1070px;width:79px">$13.95</div>
<div class="c r wh" style="left:1149px;width:53px">1</div>
<div class="c r wh" style="left:1202px;width:102px">$1.00</div>
<div class="c r gr" style="left:1304px;width:83px">$13.95</div>
</div>
<div class="row alt" style="top:636px;height:20px;line-height:21px">
<div class="c l" style="left:32px;width:521px">Classic Knits: 15 Timeless Designs to Knit and Keep Forever (Erika Knight Col...</div>
<div class="c l" style="left:553px;width:133px">Books</div>
<div class="c r" style="left:686px;width:97px"></div>
<div class="c l" style="left:783px;width:66px">Used</div>
<div class="c l" style="left:849px;width:118px">Library Sale</div>
<div class="c r ye" style="left:967px;width:103px">$1.00</div>
<div class="c r gr" style="left:1070px;width:79px">$11.95</div>
<div class="c r wh" style="left:1149px;width:53px">1</div>
<div class="c r wh" style="left:1202px;width:102px">$1.00</div>
<div class="c r gr" style="left:1304px;width:83px">$11.95</div>
</div>
<div class="row" style="top:656px;height:19px;line-height:20px">
<div class="c l" style="left:32px;width:521px">Collecting Lladro: Identification &amp; Price Guide</div>
<div class="c l" style="left:553px;width:133px">Books</div>
<div class="c r" style="left:686px;width:97px">11/01/2014</div>
<div class="c l" style="left:783px;width:66px">Used</div>
<div class="c l" style="left:849px;width:118px">Garage Sale</div>
<div class="c r ye" style="left:967px;width:103px">$1.50</div>
<div class="c r gr" style="left:1070px;width:79px">$34.95</div>
<div class="c r wh" style="left:1149px;width:53px">1</div>
<div class="c r wh" style="left:1202px;width:102px">$1.50</div>
<div class="c r gr" style="left:1304px;width:83px">$34.95</div>
</div>
<div class="row alt" style="top:675px;height:20px;line-height:21px">
<div class="c l" style="left:32px;width:521px">Courageous Dreaming: How Shamans Dream the World into Being</div>
<div class="c l" style="left:553px;width:133px">Books</div>
<div class="c r" style="left:686px;width:97px">11/22/2014</div>
<div class="c l" style="left:783px;width:66px">Used</div>
<div class="c l" style="left:849px;width:118px">Garage Sale</div>
<div class="c r ye" style="left:967px;width:103px">$0.25</div>
<div class="c r gr" style="left:1070px;width:79px">$9.95</div>
<div class="c r wh" style="left:1149px;width:53px">1</div>
<div class="c r wh" style="left:1202px;width:102px">$0.25</div>
<div class="c r gr" style="left:1304px;width:83px">$9.95</div>
</div>
<div class="row" style="top:695px;height:19px;line-height:20px">
<div class="c l" style="left:32px;width:521px">Cruising Fundamentals</div>
<div class="c l" style="left:553px;width:133px">Books</div>
<div class="c r" style="left:686px;width:97px">08/23/2014</div>
<div class="c l" style="left:783px;width:66px">Used</div>
<div class="c l" style="left:849px;width:118px">Garage Sale</div>
<div class="c r ye" style="left:967px;width:103px">$0.25</div>
<div class="c r gr" style="left:1070px;width:79px">$43.95</div>
<div class="c r wh" style="left:1149px;width:53px">1</div>
<div class="c r wh" style="left:1202px;width:102px">$0.25</div>
<div class="c r gr" style="left:1304px;width:83px">$43.95</div>
</div>
<div class="row alt" style="top:714px;height:20px;line-height:21px">
<div class="c l" style="left:32px;width:521px">Dear John</div>
<div class="c l" style="left:553px;width:133px">Books</div>
<div class="c r" style="left:686px;width:97px">05/23/2014</div>
<div class="c l" style="left:783px;width:66px">Used</div>
<div class="c l" style="left:849px;width:118px">Garage Sale</div>
<div class="c r ye" style="left:967px;width:103px">$1.00</div>
<div class="c r gr" style="left:1070px;width:79px">$10.95</div>
<div class="c r wh" style="left:1149px;width:53px">1</div>
<div class="c r wh" style="left:1202px;width:102px">$1.00</div>
<div class="c r gr" style="left:1304px;width:83px">$10.95</div>
</div>
<div class="row" style="top:734px;height:20px;line-height:21px">
<div class="c l" style="left:32px;width:521px">Developmental Contexts in Middle Childhood: Bridges to Adolescence and Adulthood</div>
<div class="c l" style="left:553px;width:133px">Books</div>
<div class="c r" style="left:686px;width:97px">05/19/2014</div>
<div class="c l" style="left:783px;width:66px">Used</div>
<div class="c l" style="left:849px;width:118px">Thrift Store</div>
<div class="c r ye" style="left:967px;width:103px">$2.00</div>
<div class="c r gr" style="left:1070px;width:79px">$35.00</div>
<div class="c r wh" style="left:1149px;width:53px">1</div>
<div class="c r wh" style="left:1202px;width:102px">$2.00</div>
<div class="c r gr" style="left:1304px;width:83px">$35.00</div>
</div>
<div class="row alt" style="top:754px;height:19px;line-height:20px">
<div class="c l" style="left:32px;width:521px">DK Eyewitness Books: Da Vinci And His Time</div>
<div class="c l" style="left:553px;width:133px">Books</div>
<div class="c r" style="left:686px;width:97px">08/14/2014</div>
<div class="c l" style="left:783px;width:66px">Used</div>
<div class="c l" style="left:849px;width:118px">Garage Sale</div>
<div class="c r ye" style="left:967px;width:103px">$1.00</div>
<div class="c r gr" style="left:1070px;width:79px">$14.00</div>
<div class="c r wh" style="left:1149px;width:53px">1</div>
<div class="c r wh" style="left:1202px;width:102px">$1.00</div>
<div class="c r gr" style="left:1304px;width:83px">$14.00</div>
</div>
<div class="row" style="top:773px;height:20px;line-height:21px">
<div class="c l" style="left:32px;width:521px">Duke Nukem Forever Limited Editio</div>
<div class="c l" style="left:553px;width:133px">Books</div>
<div class="c r" style="left:686px;width:97px">08/14/2014</div>
<div class="c l" style="left:783px;width:66px">New</div>
<div class="c l" style="left:849px;width:118px">Garage Sale</div>
<div class="c r ye" style="left:967px;width:103px">$0.75</div>
<div class="c r gr" style="left:1070px;width:79px">$14.00</div>
<div class="c r wh" style="left:1149px;width:53px">1</div>
<div class="c r wh" style="left:1202px;width:102px">$0.75</div>
<div class="c r gr" style="left:1304px;width:83px">$14.00</div>
</div>
<div class="row alt" style="top:793px;height:20px;line-height:21px">
<div class="c l" style="left:32px;width:521px">Ecology of the Chagos Archipelago (Linnean Society Occasional Publications)</div>
<div class="c l" style="left:553px;width:133px">Books</div>
<div class="c r" style="left:686px;width:97px">07/25/2014</div>
<div class="c l" style="left:783px;width:66px">Used</div>
<div class="c l" style="left:849px;width:118px">Garage Sale</div>
<div class="c r ye" style="left:967px;width:103px">$0.01</div>
<div class="c r gr" style="left:1070px;width:79px">$13.95</div>
<div class="c r wh" style="left:1149px;width:53px">1</div>
<div class="c r wh" style="left:1202px;width:102px">$0.01</div>
<div class="c r gr" style="left:1304px;width:83px">$13.95</div>
</div>
<div class="row" style="top:813px;height:19px;line-height:20px">
<div class="c l" style="left:32px;width:521px">Editors on Editing: What Writers Need to Know About What Editors Do</div>
<div class="c l" style="left:553px;width:133px">Books</div>
<div class="c r" style="left:686px;width:97px">09/14/2014</div>
<div class="c l" style="left:783px;width:66px">Used</div>
<div class="c l" style="left:849px;width:118px">Garage Sale</div>
<div class="c r ye" style="left:967px;width:103px">$0.50</div>
<div class="c r gr" style="left:1070px;width:79px">$10.95</div>
<div class="c r wh" style="left:1149px;width:53px">1</div>
<div class="c r wh" style="left:1202px;width:102px">$0.50</div>
<div class="c r gr" style="left:1304px;width:83px">$10.95</div>
</div>
<div class="row alt" style="top:832px;height:20px;line-height:21px">
<div class="c l" style="left:32px;width:521px">Essentials of Conservation Biology, Fourth Editio</div>
<div class="c l" style="left:553px;width:133px">Books</div>
<div class="c r" style="left:686px;width:97px">08/30/2014</div>
<div class="c l" style="left:783px;width:66px">Used</div>
<div class="c l" style="left:849px;width:118px">Garage Sale</div>
<div class="c r ye" style="left:967px;width:103px">$0.25</div>
<div class="c r gr" style="left:1070px;width:79px">$19.90</div>
<div class="c r wh" style="left:1149px;width:53px">1</div>
<div class="c r wh" style="left:1202px;width:102px">$0.25</div>
<div class="c r gr" style="left:1304px;width:83px">$19.90</div>
</div>
<div class="row" style="top:852px;height:19px;line-height:20px">
<div class="c l" style="left:32px;width:521px">Europe in the Anthropological Imagination</div>
<div class="c l" style="left:553px;width:133px">Books</div>
<div class="c r" style="left:686px;width:97px">07/19/2014</div>
<div class="c l" style="left:783px;width:66px">Used</div>
<div class="c l" style="left:849px;width:118px">Garage Sale</div>
<div class="c r ye" style="left:967px;width:103px">$1.00</div>
<div class="c r gr" style="left:1070px;width:79px">$42.95</div>
<div class="c r wh" style="left:1149px;width:53px">1</div>
<div class="c r wh" style="left:1202px;width:102px">$1.00</div>
<div class="c r gr" style="left:1304px;width:83px">$42.95</div>
</div>
<div class="row alt" style="top:871px;height:20px;line-height:21px">
<div class="c l" style="left:32px;width:521px">Fast Food Nation: The Dark Side of the All-A</div>
<div class="c l" style="left:553px;width:133px">Books</div>
<div class="c r" style="left:686px;width:97px">08/23/2014</div>
<div class="c l" style="left:783px;width:66px">Used</div>
<div class="c l" style="left:849px;width:118px">Garage Sale</div>
<div class="c r ye" style="left:967px;width:103px">$1.00</div>
<div class="c r gr" style="left:1070px;width:79px">$19.95</div>
<div class="c r wh" style="left:1149px;width:53px">1</div>
<div class="c r wh" style="left:1202px;width:102px">$1.00</div>
<div class="c r gr" style="left:1304px;width:83px">$19.95</div>
</div>
<div class="row big" style="top:891px;height:22px;line-height:23px">
<div class="c l" style="left:32px;width:521px">Fenton Art Glass Patterns, 1939-1980: Identification &amp; Value Guide</div>
<div class="c l" style="left:553px;width:133px">Books</div>
<div class="c r" style="left:686px;width:97px">11/29/2014</div>
<div class="c l" style="left:783px;width:66px">Used</div>
<div class="c l" style="left:849px;width:118px">Garage Sale</div>
<div class="c r ye" style="left:967px;width:103px">$2.00</div>
<div class="c r gr" style="left:1070px;width:79px">$18.95</div>
<div class="c r wh" style="left:1149px;width:53px">1</div>
<div class="c r wh" style="left:1202px;width:102px">$2.00</div>
<div class="c r gr" style="left:1304px;width:83px">$18.95</div>
</div>
<div class="row alt" style="top:913px;height:19px;line-height:20px">
<div class="c l" style="left:32px;width:521px">Ford F-150 Pick-Ups 2004-06 (Chilton's Total Car Care Repair Manuals</div>
<div class="c l" style="left:553px;width:133px">Books</div>
<div class="c r" style="left:686px;width:97px"></div>
<div class="c l" style="left:783px;width:66px">Used</div>
<div class="c l" style="left:849px;width:118px">Garage Sale</div>
<div class="c r ye" style="left:967px;width:103px">$1.00</div>
<div class="c r gr" style="left:1070px;width:79px">$48.95</div>
<div class="c r wh" style="left:1149px;width:53px">1</div>
<div class="c r wh" style="left:1202px;width:102px">$1.00</div>
<div class="c r gr" style="left:1304px;width:83px">$48.95</div>
</div>
<div class="hline" style="top:185px"></div>
</div>
<div id="rowhdr"><div class="bg"></div>
<div class="rn" style="top:146px;height:19px;line-height:19px">1</div>
<div class="rn" style="top:165px;height:20px;line-height:20px">2</div>
<div class="rn" style="top:185px;height:19px;line-height:19px">3</div>
<div class="rn" style="top:204px;height:20px;line-height:20px">4</div>
<div class="rn" style="top:224px;height:20px;line-height:20px">5</div>
<div class="rn" style="top:244px;height:19px;line-height:19px">6</div>
<div class="rn" style="top:263px;height:20px;line-height:20px">7</div>
<div class="rn" style="top:283px;height:20px;line-height:20px">8</div>
<div class="rn" style="top:303px;height:19px;line-height:19px">9</div>
<div class="rn" style="top:322px;height:20px;line-height:20px">10</div>
<div class="rn" style="top:342px;height:19px;line-height:19px">11</div>
<div class="rn" style="top:361px;height:20px;line-height:20px">12</div>
<div class="rn" style="top:381px;height:20px;line-height:20px">13</div>
<div class="rn" style="top:401px;height:19px;line-height:19px">14</div>
<div class="rn" style="top:420px;height:20px;line-height:20px">15</div>
<div class="rn" style="top:440px;height:19px;line-height:19px">16</div>
<div class="rn" style="top:459px;height:20px;line-height:20px">17</div>
<div class="rn" style="top:479px;height:20px;line-height:20px">18</div>
<div class="rn" style="top:499px;height:19px;line-height:19px">19</div>
<div class="rn" style="top:518px;height:20px;line-height:20px">20</div>
<div class="rn" style="top:538px;height:20px;line-height:20px">21</div>
<div class="rn" style="top:558px;height:19px;line-height:19px">22</div>
<div class="rn" style="top:577px;height:20px;line-height:20px">23</div>
<div class="rn" style="top:597px;height:19px;line-height:19px">24</div>
<div class="rn" style="top:616px;height:20px;line-height:20px">25</div>
<div class="rn" style="top:636px;height:20px;line-height:20px">26</div>
<div class="rn" style="top:656px;height:19px;line-height:19px">27</div>
<div class="rn" style="top:675px;height:20px;line-height:20px">28</div>
<div class="rn" style="top:695px;height:19px;line-height:19px">29</div>
<div class="rn" style="top:714px;height:20px;line-height:20px">30</div>
<div class="rn" style="top:734px;height:20px;line-height:20px">31</div>
<div class="rn" style="top:754px;height:19px;line-height:19px">32</div>
<div class="rn" style="top:773px;height:20px;line-height:20px">33</div>
<div class="rn" style="top:793px;height:20px;line-height:20px">34</div>
<div class="rn" style="top:813px;height:19px;line-height:19px">35</div>
<div class="rn" style="top:832px;height:20px;line-height:20px">36</div>
<div class="rn" style="top:852px;height:19px;line-height:19px">37</div>
<div class="rn" style="top:871px;height:20px;line-height:20px">38</div>
<div class="rn" style="top:891px;height:22px;line-height:22px">39</div>
<div class="rn" style="top:913px;height:19px;line-height:19px">40</div>
</div>
<div id="colhdr">
<div class="cl" style="left:-1px;width:521px">A</div>
<div class="cl" style="left:520px;width:133px">B</div>
<div class="cl" style="left:653px;width:97px">C</div>
<div class="cl" style="left:750px;width:66px">D</div>
<div class="cl" style="left:816px;width:118px">E</div>
<div class="cl" style="left:934px;width:103px">F</div>
<div class="cl" style="left:1037px;width:79px">G</div>
<div class="cl" style="left:1116px;width:53px">H</div>
<div class="cl" style="left:1169px;width:102px">I</div>
<div class="cl" style="left:1271px;width:83px">J</div>
</div></div>
</div>
</body></html>
